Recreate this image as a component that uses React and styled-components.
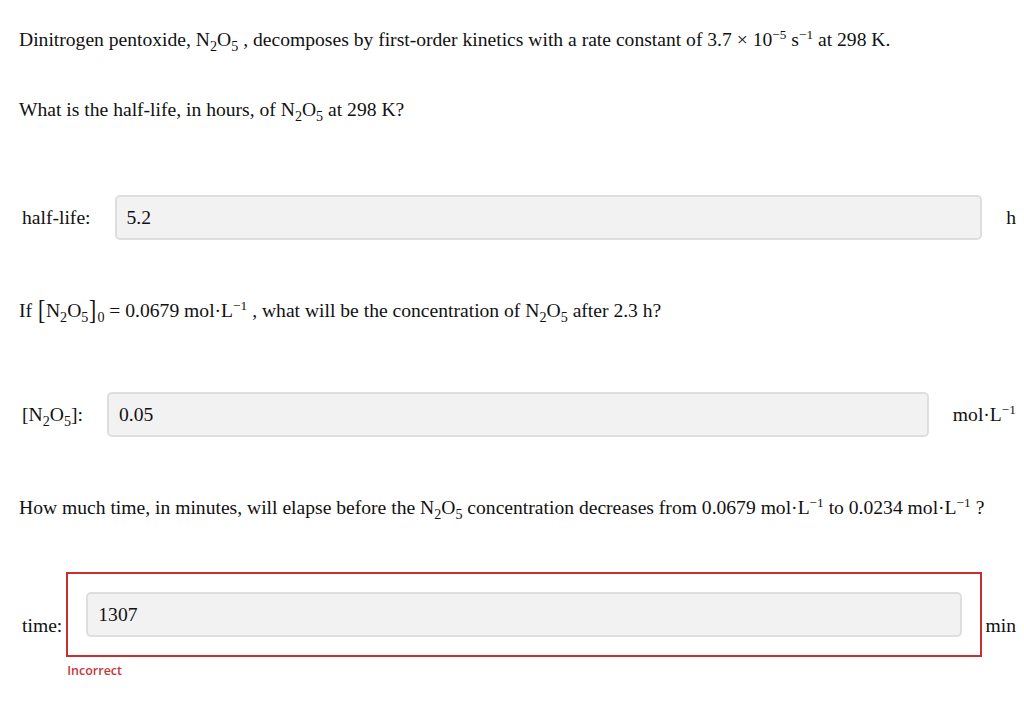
import styled, { createGlobalStyle } from "styled-components";

const Global = createGlobalStyle`
  body{
    margin:0;
    background:#fff;
    color:#111;
    font-family:"Liberation Serif","Times New Roman",serif;
    font-size:19.6px;
  }
`

const Sheet = styled.main`
  padding:28px 0 0;
  display:flex;
  flex-direction:column;
`

const Prompt = styled.p`
  margin:0 0 ${p => p.$gap ?? 73}px;
  padding-left:19px;
  line-height:24px;
  white-space:nowrap;
`

const Sub = styled.sub`
  font-size:72%;
  line-height:0;
  vertical-align:-0.36em;
`

const Sup = styled.sup`
  font-size:68%;
  line-height:0;
  vertical-align:0.5em;
`

const Bracket = styled.span`
  display:inline-block;
  font-size:27px;
  line-height:0;
  transform:scaleX(0.8);
  vertical-align:-2px;
`

const Row = styled.div`
  display:flex;
  align-items:center;
  gap:24px;
  padding:0 8px 0 22px;
  margin-bottom:59px;
  &:last-child{
    margin-bottom:0;
  }
`

const Label = styled.span`
  white-space:nowrap;
  line-height:24px;
`

const Unit = styled.span`
  white-space:nowrap;
  line-height:24px;
`

const Field = styled.div`
  flex:1;
  display:flex;
  flex-direction:column;
`

const Flagged = styled.div`
  margin:0 -20px;
  padding:18px;
  border:2px solid #c8302f;
`

const Input = styled.div`
  box-sizing:border-box;
  height:45px;
  padding:9px 10px 0;
  background:#f2f2f2;
  border:2px solid #dedede;
  border-radius:5px;
  font-family:"Liberation Serif","Times New Roman",serif;
  line-height:24px;
`

const Message = styled.span`
  margin:6px 0 0 -19px;
  font-family:"Open Sans","Liberation Sans",sans-serif;
  font-weight:600;
  font-size:12.5px;
  line-height:16px;
  color:#c8363a;
`

const N2O5 = () => <>N<Sub>2</Sub>O<Sub>5</Sub></>
const MolL = () => <>mol·L<Sup>−1</Sup></>

const App = () => {
  return <>
    <Global />
    <Sheet>
      <Prompt $gap={46}>
        Dinitrogen pentoxide, <N2O5 /> , decomposes by first-order kinetics with a rate constant of 3.7 × 10<Sup>−5</Sup> s<Sup>−1</Sup> at 298 K.
      </Prompt>
      <Prompt>What is the half-life, in hours, of <N2O5 /> at 298 K?</Prompt>

      <Row>
        <Label>half-life:</Label>
        <Field><Input>5.2</Input></Field>
        <Unit>h</Unit>
      </Row>

      <Prompt $gap={69}>
        If <Bracket>[</Bracket><N2O5 /><Bracket>]</Bracket><Sub>0</Sub> = 0.0679 <MolL /> , what will be the concentration of <N2O5 /> after 2.3 h?
      </Prompt>

      <Row>
        <Label>[<N2O5 />]:</Label>
        <Field><Input>0.05</Input></Field>
        <Unit><MolL /></Unit>
      </Row>

      <Prompt $gap={52}>
        How much time, in minutes, will elapse before the <N2O5 /> concentration decreases from 0.0679 <MolL /> to 0.0234 <MolL /> ?
      </Prompt>

      <Row>
        <Label>time:</Label>
        <Field>
          <Flagged><Input>1307</Input></Flagged>
          <Message>Incorrect</Message>
        </Field>
        <Unit>min</Unit>
      </Row>
    </Sheet>
  </>
}

export default App
